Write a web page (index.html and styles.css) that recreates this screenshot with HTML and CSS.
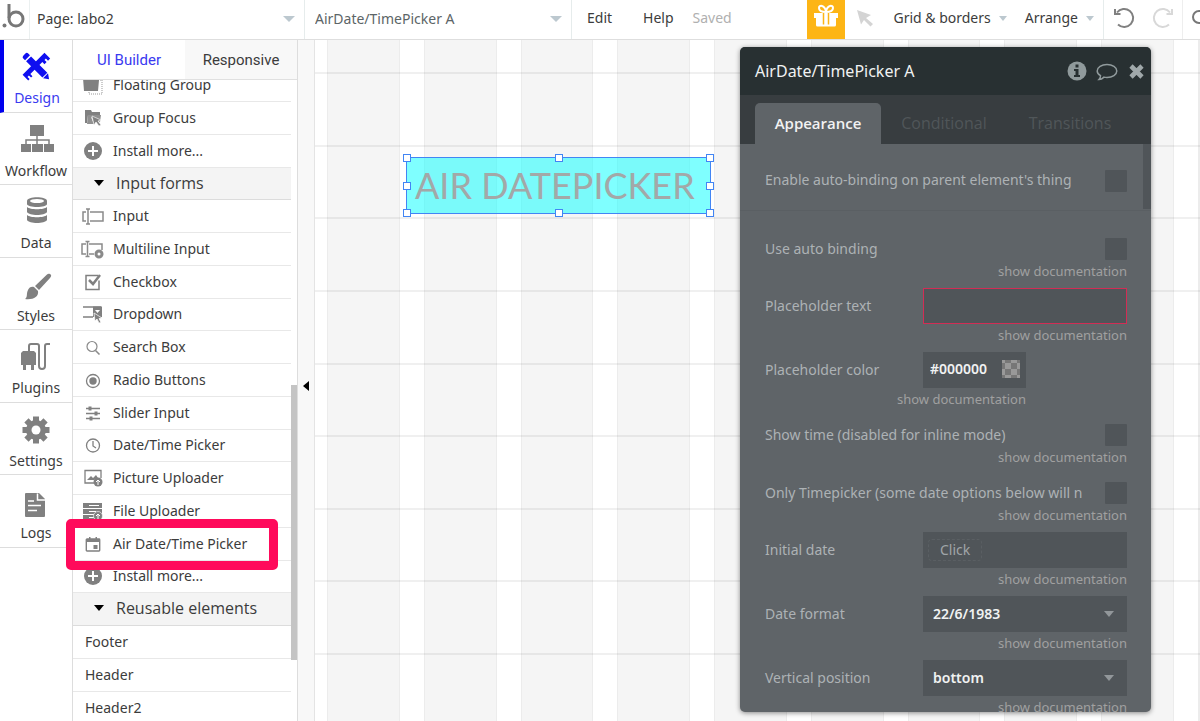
FILE: index.html
```html
<!DOCTYPE html>
<html lang="en">
<head>
<meta charset="utf-8">
<title>labo2 editor</title>
<link rel="stylesheet" href="styles.css">
</head>
<body>
<div class="app">
  <header class="topbar">
    <a class="logo" href="#" aria-label="Home">
      <svg width="24" height="28" viewBox="0 0 24 28"><circle cx="3.500" cy="21.500" r="2" fill="#777"/><path d="M8 0v14" stroke="#777" stroke-width="3" fill="none"/><circle cx="15" cy="15" r="7" fill="none" stroke="#777" stroke-width="3"/></svg>
    </a>
    <div class="picker picker-page">
      <select aria-label="Page"><option>Page: labo2</option></select><i class="caret caret-lg"></i>
    </div>
    <div class="picker picker-element">
      <select aria-label="Element"><option>AirDate/TimePicker A</option></select><i class="caret caret-lg"></i>
    </div>
    <nav class="menu">
      <button type="button">Edit</button>
      <button type="button">Help</button>
      <span class="saved">Saved</span>
    </nav>
    <div class="tools">
      <button class="gift" type="button" aria-label="Gifts">
        <svg width="26" height="24" viewBox="0 0 26 24" fill="#fff"><path d="M1 9h24v5h-2v7a1.500 1.500 0 0 1-1.500 1.500h-17A1.500 1.500 0 0 1 3 21v-7H1z"/><path d="M13 8C9 8 6 6.500 6 4c0-3.500 5.500-3 7 3 1.500-6 7-6.500 7-3 0 2.500-3 4-7 4z" fill="none" stroke="#fff" stroke-width="2"/><path d="M10.500 9v11.500M15.500 9v11.500" stroke="#fdb515" stroke-width="1.500"/></svg>
      </button>
      <button class="pointer" type="button" aria-label="Select tool">
        <svg width="20" height="20" viewBox="0 0 20 20"><path d="M2 2l14 5-5 3 7 6-2.500 2.500L9 12l-3 4.500z" fill="#d4d4d4"/></svg>
      </button>
      <button class="drop" type="button">Grid &amp; borders<i class="caret"></i></button>
      <button class="drop" type="button">Arrange<i class="caret"></i></button>
      <div class="history">
        <button type="button" aria-label="Undo"><svg width="22" height="22" viewBox="0 0 22 22" fill="none" stroke="#808080" stroke-width="2"><path d="M4 5.500A9 9 0 1 1 5 17.500"/><path d="M2 2v5h5.500"/></svg></button>
        <button type="button" aria-label="Redo"><svg width="22" height="22" viewBox="0 0 22 22" fill="none" stroke="#d8d8d8" stroke-width="2"><path d="M18 5.500A9 9 0 1 0 17 17.500"/><path d="M20 2v5h-5.500"/></svg></button>
      </div>
      <button class="search" type="button" aria-label="Search"><svg width="14" height="20" viewBox="0 0 14 20"><circle cx="7" cy="9" r="6" fill="none" stroke="#777" stroke-width="2"/></svg></button>
    </div>
  </header>

  <div class="workspace">
    <nav class="rail">
      <a class="active" href="#"><svg width="36" height="32" viewBox="0 0 36 32"><g transform="translate(17 17)" fill="#0f0ff0"><path transform="rotate(-45)" d="M-15-4h31v8h-3V1h-2v3h-3V1H-9v3h-2V1h-2v3h-2z"/><g transform="rotate(45)"><path d="M-11-4h23v7h-23zM-15-4h2.500v7H-15a2 2 0 0 1-2-2v-3a2 2 0 0 1 2-2zM13-4l5 3.500L13 3z"/></g></g></svg>Design</a>
      <a href="#"><svg width="36" height="32" viewBox="0 0 36 32" fill="#808080"><path d="M12 2h14v11H12zM3 21h10v8H3zM14 21h11v8H14zM26 21h10v8H26z"/><path d="M19 13v8M8 21v-4h23v4" fill="none" stroke="#808080" stroke-width="1.500"/></svg>Workflow</a>
      <a href="#"><svg width="36" height="32" viewBox="0 0 36 32" fill="#808080"><path d="M9 6c0-5 20-5 20 0v3c0 4-20 4-20 0z"/><path d="M9 12c3 3 17 3 20 0v5c-2 4-18 4-20 0zM9 20c3 3 17 3 20 0v5c-2 4-18 4-20 0z"/><ellipse cx="19" cy="6" rx="7" ry="2" fill="#fff"/></svg>Data</a>
      <a href="#"><svg width="36" height="32" viewBox="0 0 36 32" fill="#808080"><path d="M32 6c2 1 1 3 0 4L21 22l-4-4L29 6.500c1-1 2-1 3-.5z"/><path d="M16 19l4 4c1 6-5 9-13 8 3-2 1-5 3-9 1-3 4-4 6-3z"/></svg>Styles</a>
      <a href="#"><svg width="36" height="32" viewBox="0 0 36 32" fill="#808080"><path d="M5 11h11l2 2v12H3V13zM5 24h3v6H5zM13 24h3v6h-3z"/><path d="M11 11V6q0-2 2-2h6q2 0 2 2v20c0 4 6 4 6 0V6q0-2 2-2h3" fill="none" stroke="#808080" stroke-width="2"/></svg>Plugins</a>
      <a href="#"><svg width="36" height="32" viewBox="0 0 36 32"><g fill="#808080"><circle cx="18" cy="17" r="10"/><path d="M15 3.500h6V9h-6zM15 25h6v5.500h-6zM4.500 14H10v6H4.500zM26 14h5.500v6H26z"/><path transform="rotate(45 18 17)" d="M15 3.500h6V9h-6zM15 25h6v5.500h-6zM4.500 14H10v6H4.500zM26 14h5.500v6H26z"/></g><circle cx="18" cy="17" r="4.500" fill="#fff"/></svg>Settings</a>
      <a href="#"><svg width="36" height="32" viewBox="0 0 36 32"><path d="M9 8h12l6 6v17a1 1 0 0 1-1 1H8a1 1 0 0 1-1-1V9a1 1 0 0 1 1-1z" fill="#808080"/><path d="M19.500 8.500V15h7.500M10 16h6M10 20.500h13M10 25.500h9" fill="none" stroke="#fff" stroke-width="1.500"/></svg>Logs</a>
    </nav>

    <aside class="palette">
      <div class="tabs">
        <button class="tab active" type="button">UI Builder</button>
        <button class="tab" type="button">Responsive</button>
      </div>
      <div class="palette-body">
        <ul class="list">
          <li><svg width="24" height="24" viewBox="0 0 24 24"><path d="M8 17v4h13V7h-4" fill="none" stroke="#999" stroke-dasharray="1 1"/><path d="M2 5h6l1 2h9l-1 11H3z" fill="#808080"/></svg>Floating Group</li>
          <li><svg width="24" height="24" viewBox="0 0 24 24"><path d="M4 4h6l1 2h8v3H7l-1 8H4z" fill="#808080"/><path d="M7 9h13l-1 7-9-5 3 7H6z" fill="#909090"/><path d="M11 10l9 4-3 1 3 4-2 1-3-4-2 3z" fill="#808080" stroke="#fff" stroke-width=".6"/></svg>Group Focus</li>
          <li><svg width="24" height="24" viewBox="0 0 24 24"><circle cx="12" cy="12" r="9" fill="#808080"/><path d="M12 7v10M7 12h10" stroke="#fff" stroke-width="2"/></svg>Install more...</li>
          <li class="group"><i class="fold"></i>Input forms</li>
          <li><svg width="24" height="24" viewBox="0 0 24 24" fill="none" stroke="#8a8a8a" stroke-width="1.500"><path d="M5 8H2v9h3M9 8h13v9H9M7 5v15M5 5h4M5 20h4"/></svg>Input</li>
          <li><svg width="24" height="24" viewBox="0 0 24 24" fill="none" stroke="#8a8a8a" stroke-width="1.500"><path d="M5 7H1v10h4M8 7h13v6M8 17h5M6.500 4.500v15M4.500 4.500h4M4.500 19.500h4"/><circle cx="18" cy="17" r="3" stroke-width="3"/></svg>Multiline Input</li>
          <li><svg width="24" height="24" viewBox="0 0 24 24" fill="none" stroke="#808080" stroke-width="1.500"><path d="M17 5.500H5v14h13v-9"/><path d="M8 10l4 4 7-9" stroke-width="2.500"/></svg>Checkbox</li>
          <li><svg width="24" height="24" viewBox="0 0 24 24"><path d="M2 5h18M2 15h10" stroke="#808080" stroke-width="1.500"/><path d="M12 4.500h9V15h-9z" fill="#808080"/><path d="M14 8h5l-2.500 3z" fill="#fff"/><path d="M13 11l8 5-3 .5 2 4-2 .5-2-4-2 2z" fill="#808080" stroke="#fff" stroke-width=".7"/></svg>Dropdown</li>
          <li><svg width="24" height="24" viewBox="0 0 24 24" fill="none" stroke="#8a8a8a"><circle cx="11" cy="11.500" r="5" stroke-width="1.200"/><path d="M14.500 15.500l4 4" stroke-width="1.600"/></svg>Search Box</li>
          <li><svg width="24" height="24" viewBox="0 0 24 24"><circle cx="12" cy="13" r="6.500" fill="none" stroke="#808080" stroke-width="1.300"/><circle cx="12" cy="13" r="3.700" fill="#808080"/></svg>Radio Buttons</li>
          <li><svg width="24" height="24" viewBox="0 0 24 24" stroke="#808080" stroke-width="1.500"><path d="M5 7.500h14M5 12.500h14M5 17.500h14"/><path d="M9 5.500v4M15 10.500v4M10 15.500v4" stroke-width="3"/></svg>Slider Input</li>
          <li><svg width="24" height="24" viewBox="0 0 24 24" fill="none" stroke="#808080" stroke-width="1.300"><circle cx="12" cy="12.500" r="6.500"/><path d="M12 8v5l3 2"/></svg>Date/Time Picker</li>
          <li><svg width="24" height="24" viewBox="0 0 24 24"><path d="M13 17H4V4.500h16V12" fill="none" stroke="#808080" stroke-width="1.300"/><path d="M6 14l4-4 2 2 3-3 2 3-4 2z" fill="#808080"/><circle cx="17" cy="16" r="4.500" fill="#808080"/><path d="M17 19v-5M15 16l2-2 2 2" stroke="#fff" fill="none"/></svg>Picture Uploader</li>
          <li><svg width="24" height="24" viewBox="0 0 24 24"><path d="M2 4h19v5H2zM2 10h19v5H2zM2 16h19v5H2z" fill="#808080"/><path d="M8 6.500h10M8 12.500h7M8 18.500h5" stroke="#fff"/><circle cx="17" cy="17" r="4.500" fill="#808080" stroke="#fff" stroke-width=".6"/><path d="M17 20v-5M15 17l2-2 2 2" stroke="#fff" fill="none"/></svg>File Uploader</li>
          <li><svg width="24" height="24" viewBox="0 0 24 24"><path d="M6 7h12a.7.7 0 0 1 .7.700v10.600a.7.700 0 0 1-.7.700H6a.7.700 0 0 1-.7-.7V7.700A.7.700 0 0 1 6 7z" fill="none" stroke="#808080" stroke-width="1.400"/><path d="M5 7h14v3H5zM8 5h1.500v3H8zM14.500 5H16v3h-1.500zM12.500 13h4v4h-4z" fill="#808080"/></svg>Air Date/Time Picker</li>
          <li><svg width="24" height="24" viewBox="0 0 24 24"><circle cx="12" cy="12" r="9" fill="#808080"/><path d="M12 7v10M7 12h10" stroke="#fff" stroke-width="2"/></svg>Install more...</li>
          <li class="group"><i class="fold"></i>Reusable elements</li>
          <li class="plain">Footer</li>
          <li class="plain">Header</li>
          <li class="plain">Header2</li>
        </ul>
        <div class="scroll-thumb"></div>
      </div>
    </aside>

    <div class="gutter"><button type="button" aria-label="Collapse palette"></button></div>

    <main class="canvas">
      <div class="columns"><i></i><i></i><i></i><i></i><i></i><i></i><i></i><i></i><i></i><i></i></div>
      <div class="rows"><i></i><i></i><i></i><i></i><i></i><i></i><i></i><i></i><i></i></div>

      <div class="selection">AIR DATEPICKER
        <b class="h n w"></b><b class="h n c"></b><b class="h n e"></b>
        <b class="h m w"></b><b class="h m e"></b>
        <b class="h s w"></b><b class="h s c"></b><b class="h s e"></b>
      </div>

      <section class="editor">
        <header class="editor-head">
          <h2>AirDate/TimePicker A</h2>
          <button type="button" aria-label="Info"><svg width="20" height="20" viewBox="0 0 20 20"><circle cx="10" cy="10" r="9.500" fill="#909a9c"/><path d="M8.500 3.500h3v3h-3zM7 8h4.500v6H13v2H7v-2h1.500v-4H7z" fill="#283032"/></svg></button>
          <button type="button" aria-label="Comment"><svg width="22" height="20" viewBox="0 0 22 20"><path d="M11 3.500c5.500 0 9.800 3 9.800 6.500s-4.300 6.500-9.800 6.500c-1 0-2-.1-3-.4-1.500 1.500-3.500 2.400-5 2.400 1-1 1.500-2.500 1.500-3.800C2.500 13.500 1.200 11.800 1.200 10c0-3.500 4.300-6.500 9.800-6.500z" fill="none" stroke="#909a9c" stroke-width="1.500"/></svg></button>
          <button type="button" aria-label="Close"><svg width="18" height="20" viewBox="0 0 18 20"><path d="M4 5l11 11M15 5L4 16" stroke="#a0a8aa" stroke-width="4.600"/></svg></button>
        </header>
        <div class="editor-tabs">
          <button class="active" type="button">Appearance</button>
          <button type="button">Conditional</button>
          <button type="button">Transitions</button>
        </div>
        <div class="editor-body">
          <div class="binding"><label for="bind">Enable auto-binding on parent element's thing</label><input id="bind" type="checkbox"></div>
          <div class="props">
            <div class="prop check"><label for="p1">Use auto binding</label><input id="p1" type="checkbox"><a href="#">show documentation</a></div>
            <div class="prop"><label for="p2">Placeholder text</label><div class="field invalid"><input id="p2" type="text"></div><a href="#">show documentation</a></div>
            <div class="prop short"><label for="p3">Placeholder color</label><div class="field color"><input id="p3" type="text" value="#000000"><i class="swatch"></i></div><a href="#">show documentation</a></div>
            <div class="prop check"><label for="p4">Show time (disabled for inline mode)</label><input id="p4" type="checkbox"><a href="#">show documentation</a></div>
            <div class="prop check"><label for="p5">Only Timepicker (some date options below will n</label><input id="p5" type="checkbox"><a href="#">show documentation</a></div>
            <div class="prop"><label for="p6">Initial date</label><div class="field"><button id="p6" class="click" type="button">Click</button></div><a href="#">show documentation</a></div>
            <div class="prop"><label for="p7">Date format</label><div class="field choice"><select id="p7"><option>22/6/1983</option></select><i class="caret"></i></div><a href="#">show documentation</a></div>
            <div class="prop"><label for="p8">Vertical position</label><div class="field choice"><select id="p8"><option>bottom</option></select><i class="caret"></i></div><a href="#">show documentation</a></div>
          </div>
          <div class="editor-thumb"></div>
        </div>
      </section>
    </main>
  </div>
  <div class="highlight"></div>
</div>
</body>
</html>
```
FILE: styles.css
```css
* { box-sizing: border-box; }
body { margin: 0; font: 14px/20px "Noto Sans", "Open Sans", sans-serif; color: #3c3c3c; }
button, select, input { font: inherit; color: inherit; background: none; border: 0; padding: 0; margin: 0; border-radius: 0; }
select { appearance: none; outline: 0; }
a { color: inherit; text-decoration: none; }
svg { display: block; flex: none; }
.app { position: relative; height: 100vh; overflow: hidden; display: flex; flex-direction: column; background: #fff; }

/* Top bar */
.topbar { flex: none; height: 40px; display: flex; align-items: stretch; border-bottom: 1px solid #dedede; overflow: hidden; }
.logo { width: 30px; padding: 4px 0 0 1px; border-right: 1px solid #ebf0f0; }
.picker { display: grid; align-items: center; border-right: 1px solid #e6ecec; padding-bottom: 2px; }
.picker select, .picker .caret { grid-area: 1 / 1; }
.picker .caret { justify-self: end; margin-right: 9px; pointer-events: none; }
.picker-page { width: 275px; padding-left: 7px; }
.picker-element { width: 267px; padding-left: 10px; color: #5c6567; }
.caret { border: 4px solid transparent; border-top: 5px solid #bcc8cf; border-bottom: 0; }
.caret-lg { border-width: 6px 6px 0; }
.menu { display: flex; align-items: center; padding: 0 0 3px 15px; gap: 31px; }
.saved { color: #b0b0b0; margin-left: -12px; }
.tools { margin-left: auto; display: flex; align-items: stretch; }
.gift { width: 38px; background: #fdb515; padding: 0 0 7px; display: grid; place-items: center; }
.pointer { padding: 0 0 3px 10px; }
.drop { display: flex; align-items: center; gap: 8px; padding: 0 0 3px 18px; }
.history { display: flex; align-items: center; gap: 17px; margin-left: 9px; padding: 0 8px 4px 9px; border-left: 1px solid #e6ecec; border-right: 1px solid #eee; }
.search { width: 17px; padding: 0 0 3px 9px; overflow: hidden; }

/* Left rail */
.workspace { flex: 1; min-height: 0; display: flex; }
.rail { flex: none; width: 73px; border-right: 1px solid #ddd; }
.rail a { height: 73px; padding-top: 10px; display: flex; flex-direction: column; align-items: center; gap: 6px; border-bottom: 1px solid #ddd; }
.rail a:nth-child(even) { height: 72px; }
.rail .active { color: #3a3af0; border-left: 4px solid #0000ee; padding-right: 2px; }

/* Element palette */
.palette { flex: none; width: 225px; display: flex; flex-direction: column; border-right: 1px solid #ddd; }
.tabs { display: flex; flex: none; height: 40px; border-bottom: 1px solid #e0e0e0; }
.tab { flex: 1; font-family: Roboto, sans-serif; font-size: 15px; background: #f8f8f8; }
.tab.active { color: #3a3af0; background: #fff; }
.palette-body { flex: 1; min-height: 0; overflow: hidden; display: flex; align-items: flex-start; }
.list { flex: 1; list-style: none; margin: -11px 0 0; padding: 0; }
.list li { height: 33px; display: flex; align-items: center; gap: 8px; padding: 0 0 1px 8px; border-bottom: 1px solid #e8e8e8; }
.list li:nth-child(4n) { height: 32px; }
.list .group { background: #f4f4f4; font-family: "Open Sans", "Noto Sans", sans-serif; font-size: 16px; gap: 12px; padding: 0 0 2px 21px; border-color: #dcdcdc; }
.list .plain { padding: 0 0 0 12px; }
.fold { border: 5px solid transparent; border-top: 6px solid #000; border-bottom: 0; }
.scroll-thumb { width: 6px; height: 275px; margin-top: 305px; background: #c4c4c4; }
.gutter { flex: none; width: 16px; display: flex; align-items: center; background: #f8f8f8; padding: 10px 0 0 5px; }
.gutter button { border: 5px solid transparent; border-right: 6px solid #000; border-left: 0; }

/* Canvas */
.canvas { flex: 1; min-width: 0; position: relative; border-left: 1px solid #e4e4e4; overflow: hidden; background: #fff; }
.columns, .rows { position: absolute; inset: 0; display: grid; }
.columns { grid-template-columns: repeat(9, 1fr) 2px; column-gap: 24px; padding-left: 12px; }
.columns i { background: #f5f5f5; border: solid #ececec; border-width: 0 1px; }
.rows { grid-template-rows: 34px repeat(8, 1fr); padding-bottom: 66px; }
.rows i { border-bottom: 2px solid rgba(0, 0, 0, .06); }
.selection { position: absolute; left: 91px; top: 117px; width: 305px; height: 57px; padding: 0 8px; border: 1px solid #4285f4; background: rgba(0, 255, 255, .5); color: #a3a8a8; font: 36px/54px Lato, sans-serif; white-space: nowrap; }
.h { position: absolute; width: 8px; height: 8px; margin: -4px; background: #fff; border: 1px solid #4285f4; }
.n { top: 0; } .m { top: 50%; } .s { top: 100%; }
.w { left: 0; } .c { left: 50%; } .e { left: 100%; }

/* Property editor */
.editor { position: absolute; top: 7px; right: 49px; bottom: 9px; width: 411px; display: flex; flex-direction: column; overflow: hidden; border-radius: 5px; background: #5f6468; color: #adb2b5; box-shadow: 0 1px 5px rgba(0, 0, 0, .45); }
.editor-head { flex: none; height: 48px; display: flex; align-items: center; gap: 9px; padding: 0 6px 0 15px; background: #283032; }
.editor-head h2 { flex: 1; margin: 0; font-size: 16px; font-weight: 400; color: #f0f2f2; }
.editor-tabs { flex: none; height: 49px; padding: 8px 15px 0; display: flex; background: #383d40; }
.editor-tabs button { width: 126px; font: 16px/20px "Open Sans", "Noto Sans", sans-serif; color: #505659; padding-bottom: 2px; }
.editor-tabs .active { background: #5f6468; color: #f2f2f2; border-radius: 5px 5px 0 0; font-weight: 600; font-size: 15px; }
.editor-body { flex: 1; min-height: 0; overflow: hidden; position: relative; }
.binding { display: flex; justify-content: space-between; align-items: center; height: 67px; padding: 8px 24px 0 25px; border-bottom: 1px solid #5a5f63; }
.binding label { padding-bottom: 2px; }
input[type="checkbox"] { appearance: none; width: 22px; height: 22px; background: #505559; border-radius: 1px; }
.props { display: flex; flex-direction: column; gap: 6px; padding: 19px 24px 0 25px; }
.prop { display: grid; grid-template-columns: 158px 1fr; align-items: center; }
.prop.check { grid-template-columns: 1fr 22px; padding-top: 8px; }
.prop.short { grid-template-columns: 158px 103px; }
.prop a { grid-column: 1 / -1; justify-self: end; font-size: 13px; line-height: 22px; color: #a0a0a0; }
.field { width: 100%; height: 36px; background: #505559; display: flex; align-items: center; color: #f0f2f2; }
.field input { width: 100%; }
.invalid { border: 1px solid #d22d55; padding: 0 8px; }
.field.color { gap: 12px; padding: 0 7px 2px; }
.color input { width: 60px; font-weight: 600; font-size: 14px; }
.swatch { flex: none; width: 18px; height: 18px; background: repeating-conic-gradient(#777 0 25%, #999 0 50%) 3px 3px / 12px 12px; }
.click { margin-left: 5px; padding: 0 11px; border: 1px dashed #5a5f63; border-radius: 4px; color: #a0a5a8; }
.choice { display: grid; padding: 0 13px 0 10px; font-weight: 600; font-size: 14px; }
.choice select, .choice .caret { grid-area: 1 / 1; }
.choice .caret { justify-self: end; border-width: 6px 5px 0; border-top-color: #92979a; pointer-events: none; }
.editor-thumb { position: absolute; top: 0; right: 0; width: 8px; height: 65px; background: #505559; }

/* Callout around the picker entry */
.highlight { position: absolute; left: 66px; top: 519px; width: 212px; height: 51px; border: 9px solid #ff0a5b; border-radius: 5px; pointer-events: none; }
```
